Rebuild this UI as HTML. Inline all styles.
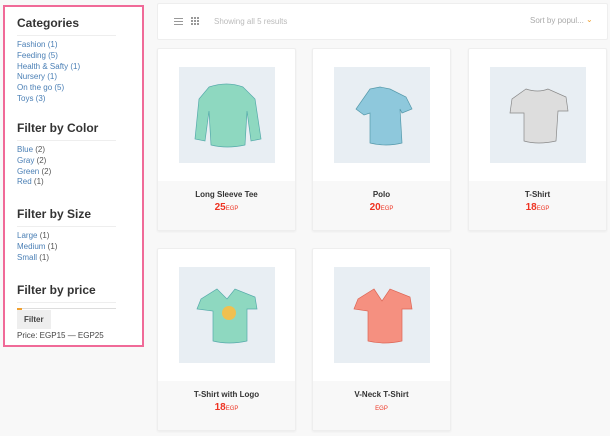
<!DOCTYPE html>
<html><head><style>
*{margin:0;padding:0;box-sizing:border-box}
body{width:610px;height:436px;background:#f8f8f8;font-family:"Liberation Sans",sans-serif;position:relative;overflow:hidden}
.side{position:absolute;left:3px;top:5px;width:141px;height:342px;background:#fff;border:2px solid #f06a98}
.side h3{font-size:12px;color:#333;font-weight:bold;margin:0;padding-bottom:5px;border-bottom:1px solid #eee;width:99px}
.w{position:absolute;left:12px}
.side ul{list-style:none;font-size:8px;line-height:10.8px;margin-top:4px;color:#555}
.side a{color:#4a7fb5}
.top{position:absolute;left:157px;top:3px;width:451px;height:37px;background:#fff;border:1px solid #eee;border-radius:2px}
.card{position:absolute;width:139px;height:183px;background:#fff;border:1px solid #eee;border-radius:2px;box-shadow:0 1px 2px rgba(0,0,0,.05)}
.img{position:absolute;left:21px;top:18px;width:96px;height:96px;background:#e8eef3}
.ft{position:absolute;left:0;right:0;top:132px;bottom:0;background:#f8f8f8;text-align:center}
.nm{font-size:8px;color:#333;font-weight:bold;margin-top:9px}
.pr{color:#e32;font-weight:bold;font-size:10px;margin-top:3px}
.pr small{font-size:6px;font-weight:normal}
</style></head><body>
<div class="side">
 <div class="w" style="top:9px"><h3>Categories</h3><ul><li><a>Fashion</a> <a>(1)</a></li><li><a>Feeding (5)</a></li><li><a>Health &amp; Safty (1)</a></li><li><a>Nursery (1)</a></li><li><a>On the go (5)</a></li><li><a>Toys (3)</a></li></ul></div>
 <div class="w" style="top:114px"><h3>Filter by Color</h3><ul><li><a>Blue</a> (2)</li><li><a>Gray</a> (2)</li><li><a>Green</a> (2)</li><li><a>Red</a> (1)</li></ul></div>
 <div class="w" style="top:200px"><h3>Filter by Size</h3><ul><li><a>Large</a> (1)</li><li><a>Medium</a> (1)</li><li><a>Small</a> (1)</li></ul></div>
 <div class="w" style="top:276px"><h3>Filter by price</h3>
  <div style="width:99px;border-top:1px solid #ddd;margin-top:5px;position:relative"><div style="position:absolute;left:0;top:-1px;width:5px;height:2px;background:#f0a030"></div></div>
  <div style="display:inline-block;background:#eee;font-size:8px;font-weight:bold;color:#444;padding:5px 7px;margin-top:1px">Filter</div>
  <div style="font-size:8px;color:#444;margin-top:2px">Price: EGP15 — EGP25</div>
 </div>
</div>
<div class="top">
 <svg style="position:absolute;left:16px;top:14px" width="9" height="7"><rect y="0" width="9" height="1" fill="#999"/><rect y="3" width="9" height="1" fill="#999"/><rect y="6" width="9" height="1" fill="#999"/></svg>
 <svg style="position:absolute;left:33px;top:13px" width="9" height="9" fill="#999"><rect x="0" y="0" width="2" height="2"/><rect x="3" y="0" width="2" height="2"/><rect x="6" y="0" width="2" height="2"/><rect x="0" y="3" width="2" height="2"/><rect x="3" y="3" width="2" height="2"/><rect x="6" y="3" width="2" height="2"/><rect x="0" y="6" width="2" height="2"/><rect x="3" y="6" width="2" height="2"/><rect x="6" y="6" width="2" height="2"/></svg>
 <div style="position:absolute;left:56px;top:13px;font-size:8px;color:#bbb">Showing all 5 results</div>
 <div style="position:absolute;left:372px;top:12px;font-size:8px;color:#aaa">Sort by popul...</div>
 <div style="position:absolute;left:428px;top:11px;font-size:8px;color:#f0a030">⌄</div>
</div>

<div class="card" style="left:157px;top:48px"><div class="img"><svg width="96" height="96"><path d="M30 20 Q48 14 64 20 L76 32 L82 72 L72 74 L68 44 L66 78 Q48 82 32 78 L30 44 L26 74 L16 72 L20 32 Z" fill="#8ed8c0" stroke="#5aa" stroke-width=".7"/></svg></div><div class="ft"><div class="nm">Long Sleeve Tee</div><div class="pr">25<small>EGP</small></div></div></div>
<div class="card" style="left:312px;top:48px"><div class="img"><svg width="96" height="96"><path d="M36 22 L46 20 L56 22 L72 30 L78 42 L68 46 L66 42 L68 76 Q52 80 36 76 L36 46 L30 48 L22 42 Z" fill="#8ec8dc" stroke="#59a" stroke-width=".7"/></svg></div><div class="ft"><div class="nm">Polo</div><div class="pr">20<small>EGP</small></div></div></div>
<div class="card" style="left:468px;top:48px"><div class="img"><svg width="96" height="96"><path d="M36 22 Q48 26 58 22 L76 30 L78 44 L68 44 L66 74 Q48 78 34 74 L34 46 L20 46 L22 32 Z" fill="#ddd" stroke="#888" stroke-width=".7"/></svg></div><div class="ft"><div class="nm">T-Shirt</div><div class="pr">18<small>EGP</small></div></div></div>
<div class="card" style="left:157px;top:248px"><div class="img"><svg width="96" height="96"><path d="M38 22 L48 32 L56 22 L76 30 L78 42 L68 42 L68 74 Q50 78 34 74 L34 44 L18 42 L22 32 Z" fill="#8ed8c0" stroke="#5aa" stroke-width=".7"/><circle cx="50" cy="46" r="7" fill="#f0c050"/></svg></div><div class="ft"><div class="nm">T-Shirt with Logo</div><div class="pr">18<small>EGP</small></div></div></div>
<div class="card" style="left:312px;top:248px"><div class="img"><svg width="96" height="96"><path d="M40 22 L48 34 L56 22 L76 30 L78 42 L68 42 L68 74 Q50 78 34 74 L34 44 L20 42 L24 32 Z" fill="#f59080" stroke="#d65" stroke-width=".7"/></svg></div><div class="ft"><div class="nm">V-Neck T-Shirt</div><div class="pr"><small>EGP</small></div></div></div>
</body></html>
